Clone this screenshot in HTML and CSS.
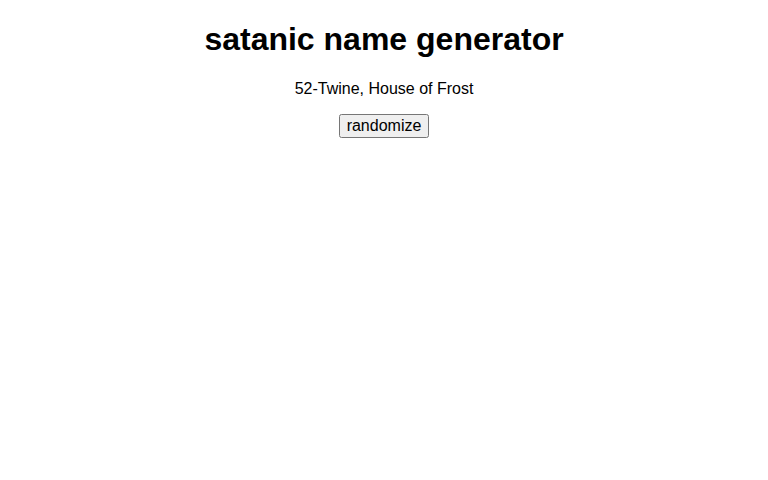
FILE: index.html
```html
<!DOCTYPE html>
<html lang="en">
<head>
  <meta charset="UTF-8">
  <meta name="viewport" content="width=device-width, initial-scale=1.0">
  <link rel="stylesheet" href="styles.css">
  <title>satanic name generator</title>
</head>
<body>

<div class="generator">
  <h1>satanic name generator</h1>
  <p id="name">52-Twine, House of Frost</p>
  <button onclick="randomize()">randomize</button>
</div>

<script>
  function randomize() {
    const names = ['Twine', 'Ash', 'Thorn', 'Cinder', 'Moth'];
    const houses = ['Frost', 'Ruin', 'Bone', 'Smoke'];
    const n = Math.floor(Math.random() * 99) + 1;
    const first = names[Math.floor(Math.random() * names.length)];
    const house = houses[Math.floor(Math.random() * houses.length)];
    document.getElementById('name').textContent = n + '-' + first + ', House of ' + house;
  }
</script>

</body>
</html>
```

FILE: styles.css
```css
body {
  font-family: "Liberation Sans", Arial, sans-serif;
  margin: 0 8px;
  color: #000;
  background: #fff;
}

.generator {
  text-align: center;
  padding-top: 21px;
}

h1 {
  font-size: 32px;
  margin: 0 0 22px;
}

p {
  font-size: 16px;
  margin: 16px 0;
}

button {
  font-family: "Liberation Sans", Arial, sans-serif;
  font-size: 16px;
}
```
